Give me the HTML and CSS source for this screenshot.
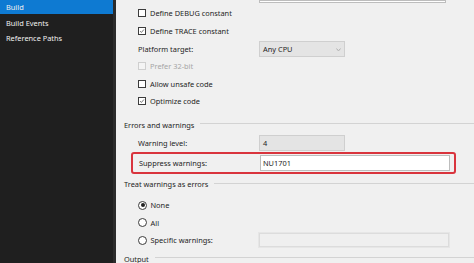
FILE: index.html
```html
<!DOCTYPE html>
<html>
<head>
<meta charset="utf-8">
<link rel="stylesheet" href="styles.css">
</head>
<body>
<div class="app">
  <nav class="side">
    <div class="nav-item active">Build</div>
    <div class="nav-item">Build Events</div>
    <div class="nav-item">Reference Paths</div>
  </nav>
  <div class="divider"></div>
  <main class="panel">
    <div class="row top-row"><span class="label"></span><div class="textbox top-box"></div></div>
    <div class="row check"><span class="cb"></span><span>Define DEBUG constant</span></div>
    <div class="row check"><span class="cb on"><svg viewBox="0 0 8 8"><path d="M1.5 4.2 L3.2 5.9 L6.6 2" fill="none" stroke="#333" stroke-width="0.9"/></svg></span><span>Define TRACE constant</span></div>
    <div class="row field"><span class="label">Platform target:</span><div class="dropdown">Any CPU<svg class="chev" viewBox="0 0 6 4"><path d="M0.5 0.8 L3 3.2 L5.5 0.8" fill="none" stroke="#888" stroke-width="0.8"/></svg></div></div>
    <div class="row check disabled"><span class="cb"></span><span>Prefer 32-bit</span></div>
    <div class="row check"><span class="cb"></span><span>Allow unsafe code</span></div>
    <div class="row check"><span class="cb on"><svg viewBox="0 0 8 8"><path d="M1.5 4.2 L3.2 5.9 L6.6 2" fill="none" stroke="#333" stroke-width="0.9"/></svg></span><span>Optimize code</span></div>

    <div class="section first"><span>Errors and warnings</span><span class="rule"></span></div>
    <div class="row field warn"><span class="label">Warning level:</span><div class="dropdown">4</div></div>
    <div class="highlight">
      <span class="label">Suppress warnings:</span><div class="textbox">NU1701</div>
    </div>

    <div class="section"><span>Treat warnings as errors</span><span class="rule"></span></div>
    <div class="radios">
      <div class="row check"><span class="rb on"></span><span>None</span></div>
      <div class="row check"><span class="rb"></span><span>All</span></div>
      <div class="row field"><span class="rb"></span><span class="rlabel">Specific warnings:</span><div class="textbox dis-box"></div></div>
    </div>

    <div class="section"><span>Output</span><span class="rule"></span></div>
  </main>
</div>
</body>
</html>
```
FILE: styles.css
```css
html, body {
  margin: 0;
  padding: 0;
  width: 474px;
  height: 263px;
  overflow: hidden;
}
body {
  font-family: "Noto Sans", "Open Sans", sans-serif;
  font-size: 7.4px;
  color: #1e1e1e;
  background: #f0f0f0;
}
.app {
  display: flex;
  height: 263px;
}
.side {
  width: 113px;
  background: #1f1f1f;
  color: #f1f1f1;
  flex: none;
}
.nav-item {
  height: 15.6px;
  line-height: 15.6px;
  padding-left: 6px;
  white-space: nowrap;
}
.nav-item.active {
  background: #0e7ad2;
  height: 14px;
  line-height: 14px;
  margin-bottom: 1.6px;
}
.divider {
  width: 3px;
  background: #2b2b2b;
  flex: none;
}
.panel {
  flex: 1;
  background: #f0f0f0;
  display: flex;
  flex-direction: column;
}
.row {
  display: flex;
  align-items: center;
  height: 17.6px;
  padding-left: 22px;
  flex: none;
  white-space: nowrap;
}
.top-row {
  height: 3px;
  align-items: flex-end;
  margin-bottom: 1.7px;
}
.label {
  width: 121px;
  flex: none;
}
.top-box {
  height: 3px;
  border-top: none;
  width: 187px;
  box-sizing: border-box;
}
.cb {
  width: 8px;
  height: 8px;
  border: 1px solid #3c3c3c;
  background: #ffffff;
  box-sizing: border-box;
  margin-right: 4px;
  flex: none;
  display: flex;
}
.cb svg {
  width: 6px;
  height: 6px;
}
.disabled {
  color: #a6a6a6;
}
.disabled .cb {
  border-color: #cfcfcf;
  background: #f4f4f4;
}
.dropdown {
  position: relative;
  width: 86px;
  height: 16px;
  box-sizing: border-box;
  background: #e4e4e4;
  border: 1px solid #cfcfcf;
  padding-left: 3px;
  display: flex;
  align-items: center;
}
.chev {
  position: absolute;
  right: 3px;
  top: 6px;
  width: 5px;
  height: 3.5px;
}
.field .label { width: 121px; }
.section {
  display: flex;
  align-items: center;
  padding-left: 8px;
  height: 20px;
  flex: none;
  white-space: nowrap;
}
.section.first {
  margin-top: 4px;
  height: 20.5px;
}
.rule {
  flex: 1;
  height: 1px;
  background: #d3d3d3;
  margin-left: 6px;
  margin-top: -2px;
}
.warn {
  height: 17px;
}
.textbox {
  background: #ffffff;
  border: 1px solid #bdbdbd;
  box-sizing: border-box;
}
.highlight {
  margin-left: 15px;
  width: 325px;
  height: 22.5px;
  box-sizing: border-box;
  border: 2px solid #d9343d;
  border-radius: 3px;
  display: flex;
  align-items: center;
  padding-left: 6px;
  flex: none;
  white-space: nowrap;
}
.highlight .label {
  width: 121px;
}
.highlight .textbox {
  width: 190px;
  height: 16px;
  padding-left: 2px;
  display: flex;
  align-items: center;
}
.radios {
  padding-top: 2px;
  display: flex;
  flex-direction: column;
}
.radios .row { height: 17.5px; }
.rb {
  width: 9px;
  height: 9px;
  box-sizing: border-box;
  border: 1px solid #3c3c3c;
  border-radius: 50%;
  background: #fff;
  margin-right: 3.5px;
  flex: none;
  display: flex;
  align-items: center;
  justify-content: center;
}
.rb.on::after {
  content: "";
  width: 4px;
  height: 4px;
  border-radius: 50%;
  background: #222;
}
.rlabel {
  width: 108.5px;
}
.dis-box {
  width: 190px;
  height: 14px;
  background: #efefef;
  border-color: #dcdcdc;
  outline: 1px solid #e6e6e6;
}
```
